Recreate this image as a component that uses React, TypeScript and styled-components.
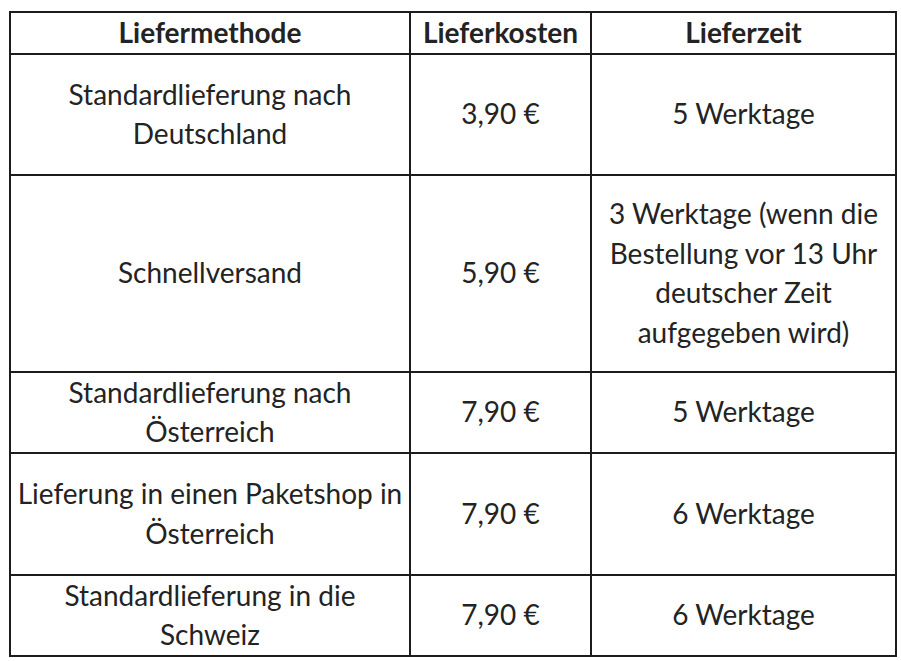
import { createGlobalStyle } from 'styled-components';
import styled from 'styled-components';

const GlobalStyle = createGlobalStyle`
    html, body {
        margin: 0;
        padding: 0;
        background: #ffffff;
    }
    body {
        font-family: Lato, 'Open Sans', sans-serif;
        color: #232323;
    }
`;

const Page = styled.div`
    padding: 11px 0 0 9px;
`;

const Table = styled.table`
    border-collapse: collapse;
    table-layout: fixed;
    width: 886px;
    font-size: 28px;
    line-height: 39.5px;
`;

const Row = styled.tr<{ $h: number }>`
    height: ${(p) => p.$h}px;
`;

const HeadCell = styled.th`
    border: 2px solid #1c1c1c;
    padding: 0 2px;
    font-weight: 700;
    text-align: center;
    vertical-align: middle;
`;

const Cell = styled.td`
    border: 2px solid #1c1c1c;
    padding: 0 2px;
    text-align: center;
    vertical-align: middle;
    font-weight: 400;
`;

interface Delivery {
    method: string[];
    cost: string;
    time: string[];
    height: number;
}

const rows: Delivery[] = [
    { method: ['Standardlieferung nach', 'Deutschland'], cost: '3,90 €', time: ['5 Werktage'], height: 121 },
    {
        method: ['Schnellversand'],
        cost: '5,90 €',
        time: ['3 Werktage (wenn die', 'Bestellung vor 13 Uhr', 'deutscher Zeit', 'aufgegeben wird)'],
        height: 197,
    },
    { method: ['Standardlieferung nach', 'Österreich'], cost: '7,90 €', time: ['5 Werktage'], height: 80 },
    { method: ['Lieferung in einen Paketshop in', 'Österreich'], cost: '7,90 €', time: ['6 Werktage'], height: 122 },
    { method: ['Standardlieferung in die', 'Schweiz'], cost: '7,90 €', time: ['6 Werktage'], height: 80 },
];

const Lines = ({ lines }: { lines: string[] }) => (
    <>
        {lines.map((l, i) => (
            <div key={i}>{l}</div>
        ))}
    </>
);

export default function App() {
    return (
        <Page>
            <GlobalStyle />
            <Table>
                <colgroup>
                    <col style={{ width: 400 }} />
                    <col style={{ width: 181 }} />
                    <col style={{ width: 305 }} />
                </colgroup>
                <thead>
                    <Row $h={40}>
                        <HeadCell>Liefermethode</HeadCell>
                        <HeadCell>Lieferkosten</HeadCell>
                        <HeadCell>Lieferzeit</HeadCell>
                    </Row>
                </thead>
                <tbody>
                    {rows.map((r, i) => (
                        <Row key={i} $h={r.height}>
                            <Cell>
                                <Lines lines={r.method} />
                            </Cell>
                            <Cell>{r.cost}</Cell>
                            <Cell>
                                <Lines lines={r.time} />
                            </Cell>
                        </Row>
                    ))}
                </tbody>
            </Table>
        </Page>
    );
}
